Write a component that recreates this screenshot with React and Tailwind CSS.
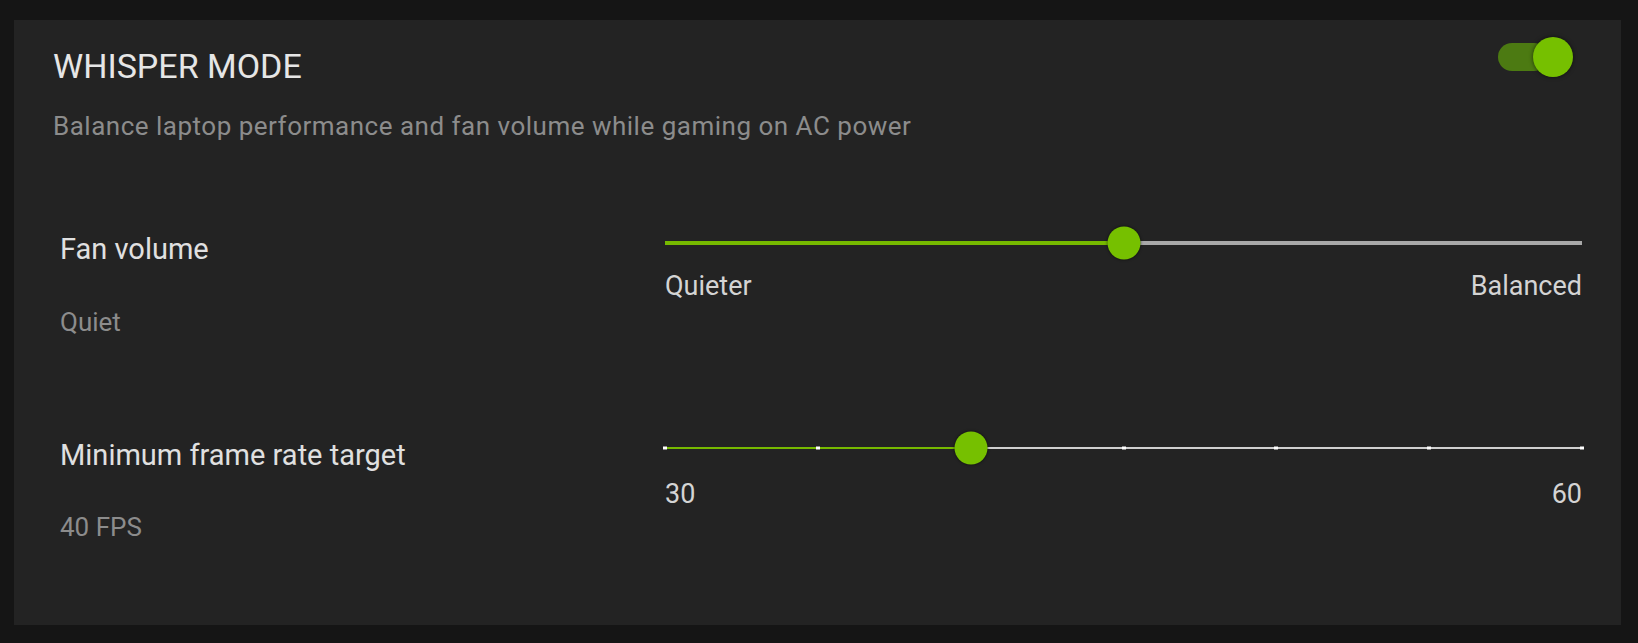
import React from 'react';

const FONT = { fontFamily: 'Roboto, "Liberation Sans", sans-serif' };

function Toggle() {
  return (
    <div className="relative w-[76px] h-[40px] flex items-center">
      <div className="w-[50px] h-[28px] rounded-full bg-[#4c7a12] ml-[1px]" />
      <div className="absolute right-0 top-0 w-[40px] h-[40px] rounded-full bg-[#76c000] shadow-[0_0_4px_rgba(0,0,0,0.6)]" />
    </div>
  );
}

function Slider({ value, ticks = 0, thin = false, left, right, gap }) {
  return (
    <div className="flex-1">
      <div className="relative h-[34px] flex items-center">
        <div className={`w-full flex ${thin ? 'h-[2px]' : 'h-[4px]'}`}>
          <div className="bg-[#76b900]" style={{ width: `${value}%` }} />
          <div className={`flex-1 ${thin ? 'bg-[#cfcfcf]' : 'bg-[#a8a8a8]'}`} />
        </div>
        {Array.from({ length: ticks }).map((_, i) => (
          <div
            key={i}
            className="absolute top-1/2 -translate-y-1/2 -translate-x-1/2 w-[4px] h-[3px] bg-white"
            style={{ left: `${(i / (ticks - 1)) * 100}%` }}
          />
        ))}
        <div
          className="absolute top-1/2 -translate-y-1/2 -translate-x-1/2 w-[33px] h-[33px] rounded-full bg-[#76c000] shadow-[0_0_3px_rgba(0,0,0,0.7)]"
          style={{ left: `${value}%` }}
        />
      </div>
      <div className={`flex justify-between text-[27px] text-[#d4d4d4] leading-none ${gap}`}>
        <span>{left}</span>
        <span>{right}</span>
      </div>
    </div>
  );
}

function Row({ label, value, pad, valueGap, children }) {
  return (
    <div className="flex">
      <div className={`w-[612px] pl-[7px] ${pad}`}>
        <div className="text-[29px] text-[#e0e0e0] leading-none">{label}</div>
        <div className={`text-[26px] text-[#8c8c8c] leading-none ${valueGap}`}>{value}</div>
      </div>
      {children}
    </div>
  );
}

export default function App() {
  return (
    <div className="w-[1638px] h-[643px] bg-[#151515] pt-[20px] pl-[14px]" style={FONT}>
      <div className="w-[1607px] h-[605px] bg-[#232323] pl-[39px] pr-[39px] pt-[17px]">
        <div className="flex justify-between items-start">
          <h1 className="text-[34px] text-[#e6e6e6] leading-none mt-[12px]">WHISPER MODE</h1>
          <div className="mr-[9px]">
            <Toggle />
          </div>
        </div>
        <p className="text-[26px] text-[#8c8c8c] leading-none mt-[30px] tracking-[0.5px]">
          Balance laptop performance and fan volume while gaming on AC power
        </p>

        <div className="mt-[87px]">
          <Row label="Fan volume" value="Quiet" pad="pt-[9px]" valueGap="mt-[45px]">
            <Slider value={50} left="Quieter" right="Balanced" gap="mt-[13px]" />
          </Row>
        </div>

        <div className="mt-[96px]">
          <Row label="Minimum frame rate target" value="40 FPS" pad="pt-[10px]" valueGap="mt-[44px]">
            <Slider value={33.333} ticks={7} thin left="30" right="60" gap="mt-[16px]" />
          </Row>
        </div>
      </div>
    </div>
  );
}
